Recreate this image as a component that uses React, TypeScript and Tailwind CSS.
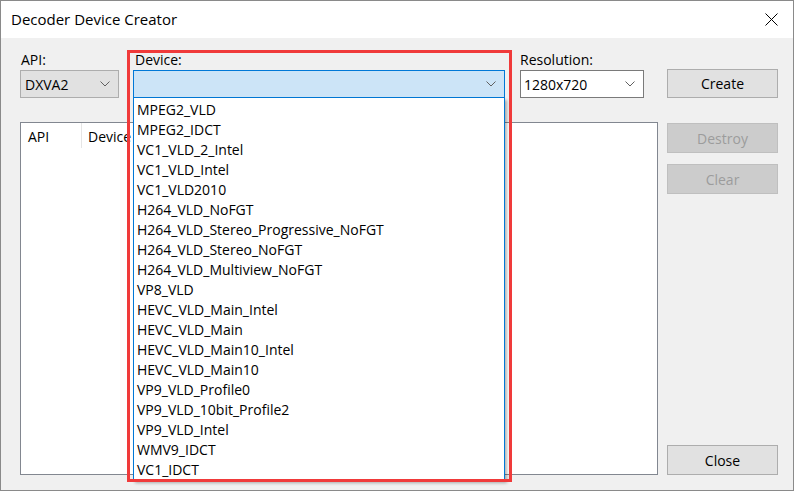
import React from 'react';

const devices = [
  'MPEG2_VLD',
  'MPEG2_IDCT',
  'VC1_VLD_2_Intel',
  'VC1_VLD_Intel',
  'VC1_VLD2010',
  'H264_VLD_NoFGT',
  'H264_VLD_Stereo_Progressive_NoFGT',
  'H264_VLD_Stereo_NoFGT',
  'H264_VLD_Multiview_NoFGT',
  'VP8_VLD',
  'HEVC_VLD_Main_Intel',
  'HEVC_VLD_Main',
  'HEVC_VLD_Main10_Intel',
  'HEVC_VLD_Main10',
  'VP9_VLD_Profile0',
  'VP9_VLD_10bit_Profile2',
  'VP9_VLD_Intel',
  'WMV9_IDCT',
  'VC1_IDCT',
];

const Chevron = () => (
  <svg width="10" height="6" viewBox="0 0 10 6" className="shrink-0">
    <path d="M0.5 0.5 L5 5 L9.5 0.5" fill="none" stroke="#606060" strokeWidth="1" />
  </svg>
);

const font = { fontFamily: '"Open Sans", "Noto Sans", sans-serif' };

export default function App() {
  return (
    <div
      className="w-[794px] h-[491px] border border-[#8a8a8a] bg-[#f0f0f0] flex flex-col overflow-hidden text-[14px] text-black"
      style={font}
    >
      {/* Title bar */}
      <div className="h-[37px] bg-white flex items-center justify-between pl-[10px] pr-[15px] shrink-0">
        <span className="text-[15px] leading-none">Decoder Device Creator</span>
        <svg width="13" height="13" viewBox="0 0 13 13">
          <path d="M0.5 0.5 L12.5 12.5 M12.5 0.5 L0.5 12.5" stroke="#000" strokeWidth="1" />
        </svg>
      </div>

      {/* Body */}
      <div className="flex-1 relative pl-[19px] pt-[12px] pr-[15px]">
        <div className="flex">
          <div className="w-[99px]">
            <div className="h-[20px] leading-[20px] pl-[1px]">API:</div>
            <div className="h-[28px] bg-[#e1e1e1] border border-[#adadad] flex items-center justify-between pl-[4px] pr-[8px]">
              <span>DXVA2</span>
              <Chevron />
            </div>
          </div>
          <div className="w-[372px] ml-[14px]">
            <div className="h-[20px] leading-[20px] pl-[2px]">Device:</div>
            <div className="h-[28px] bg-[#cce4f7] border border-[#0078d7] flex items-center justify-end pr-[8px]">
              <Chevron />
            </div>
          </div>
          <div className="w-[124px] ml-[15px]">
            <div className="h-[20px] leading-[20px]">Resolution:</div>
            <div className="h-[28px] bg-white border border-[#7a7a7a] flex items-center justify-between pl-[3px] pr-[8px]">
              <span>1280x720</span>
              <Chevron />
            </div>
          </div>
          <button className="w-[111px] h-[29px] ml-[23px] mt-[19px] bg-[#e1e1e1] border border-[#adadad]">
            Create
          </button>
        </div>

        <div className="flex mt-[24px]">
          <div className="w-[638px] h-[353px] bg-white border border-[#828790]">
            <div className="flex h-[25px]">
              <div className="w-[61px] h-full pt-[3px] pl-[7px] border-r border-[#e5e5e5]">API</div>
              <div className="pt-[3px] pl-[6px]">Device</div>
            </div>
          </div>
          <div className="w-[111px] ml-[9px] flex flex-col">
            <button className="h-[30px] mt-[1px] bg-[#cccccc] border border-[#bfbfbf] text-[#9c9c9c]">
              Destroy
            </button>
            <button className="h-[30px] mt-[11px] bg-[#cccccc] border border-[#bfbfbf] text-[#9c9c9c]">
              Clear
            </button>
            <button className="h-[30px] mt-auto bg-[#e1e1e1] border border-[#adadad]">Close</button>
          </div>
        </div>

        {/* Open dropdown list */}
        <div className="absolute left-[132px] top-[60px] w-[372px] pt-[2px] bg-white border-x border-b border-[#0078d7] shadow-[2px_2px_3px_rgba(0,0,0,0.3)]">
          {devices.map((d) => (
            <div key={d} className="h-[20px] leading-[20px] pl-[3px] whitespace-nowrap">
              {d}
            </div>
          ))}
        </div>

        {/* Annotation */}
        <div className="absolute left-[126px] top-[12px] w-[385px] h-[432px] border-[3px] border-[#f03a3a] pointer-events-none" />
      </div>
    </div>
  );
}
